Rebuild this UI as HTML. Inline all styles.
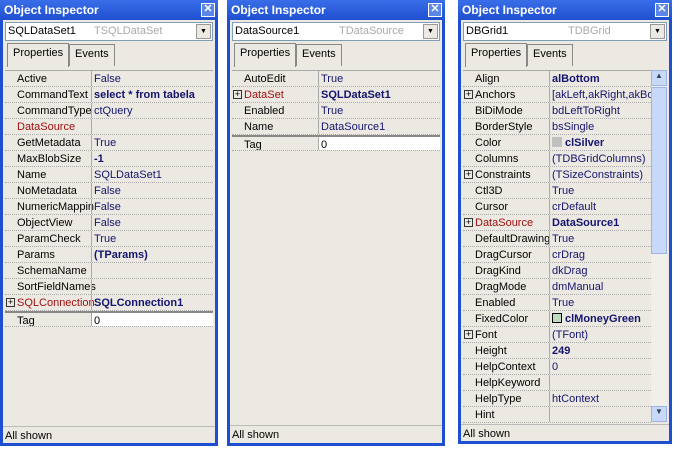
<!DOCTYPE html><html><head><style>
*{margin:0;padding:0;box-sizing:border-box}
body{width:682px;height:455px;background:#fff;position:relative;overflow:hidden;font-family:"Liberation Sans",sans-serif;font-size:11px}
.p{position:absolute;top:0;background:#ECE9E2;border:3px solid #1E4FD0;border-top:0}
.tb{position:absolute;left:-3px;right:-3px;top:0;height:20px;background:linear-gradient(#3A6EE8,#1E4FD0);color:#fff;font-weight:bold;font-size:12px;padding:3px 0 0 4px}
.x{position:absolute;right:3px;top:3px;width:14px;height:14px;background:#5A86E8;border:1px solid #fff;color:#fff;font-size:11px;line-height:11px;text-align:center}
.cb{position:absolute;left:2px;right:2px;top:22px;height:19px;background:#fff;border:1px solid #7f9db9;padding:2px 2px}
.cb .t{position:absolute;left:82px;top:2px;color:#aaa}
.dd{position:absolute;right:1px;top:1px;width:15px;height:15px;background:#ECE9E2;border:1px solid #999;font-size:7px;text-align:center;line-height:13px}
.tab{position:absolute;top:44px;height:22px;border:1px solid #888;border-bottom:0;padding:3px 5px;background:#ECE9E2}
.g{position:absolute;left:2px;right:2px;top:70px;border-top:1px solid #aaa}
.r{height:16px;border-bottom:1px dotted #aaa;position:relative;white-space:nowrap;overflow:hidden}
.n{position:absolute;left:12px;top:2px}
.v{position:absolute;top:2px;color:#14146e;border-left:1px solid #aaa;height:16px;top:0;padding:2px 0 0 2px}
.b{font-weight:bold}
.red{color:#a01010}
.pl{position:absolute;left:1px;top:3px;width:9px;height:9px;border:1px solid #333;font-size:9px;line-height:7px;text-align:center}
.sel{background:#ECE9E2;border-top:2px solid #888}
.sel .v{background:#fff;color:#000;right:0}
.st{position:absolute;left:0;right:0;height:20px;border-top:1px solid #bbb;padding:3px 2px}
</style></head><body>

<div class="p" style="left:0;width:218px;height:446px">
<div class="tb">Object Inspector<div class="x">✕</div></div>
<div class="cb">SQLDataSet1<span class="t" style="left:88px">TSQLDataSet</span><div class="dd">▼</div></div>
<div class="tab" style="left:4px;top:43px;height:24px">Properties</div><div class="tab" style="left:66px">Events</div>
<div class="g">
<div class="r"><span class="n">Active</span><span class="v" style="left:86px">False</span></div>
<div class="r"><span class="n">CommandText</span><span class="v b" style="left:86px">select * from tabela</span></div>
<div class="r"><span class="n">CommandType</span><span class="v" style="left:86px">ctQuery</span></div>
<div class="r"><span class="n red">DataSource</span><span class="v" style="left:86px"></span></div>
<div class="r"><span class="n">GetMetadata</span><span class="v" style="left:86px">True</span></div>
<div class="r"><span class="n">MaxBlobSize</span><span class="v b" style="left:86px">-1</span></div>
<div class="r"><span class="n">Name</span><span class="v" style="left:86px">SQLDataSet1</span></div>
<div class="r"><span class="n">NoMetadata</span><span class="v" style="left:86px">False</span></div>
<div class="r"><span class="n">NumericMappin</span><span class="v" style="left:86px">False</span></div>
<div class="r"><span class="n">ObjectView</span><span class="v" style="left:86px">False</span></div>
<div class="r"><span class="n">ParamCheck</span><span class="v" style="left:86px">True</span></div>
<div class="r"><span class="n">Params</span><span class="v b" style="left:86px">(TParams)</span></div>
<div class="r"><span class="n">SchemaName</span><span class="v" style="left:86px"></span></div>
<div class="r"><span class="n">SortFieldNames</span><span class="v" style="left:86px"></span></div>
<div class="r"><span class="pl">+</span><span class="n red">SQLConnection</span><span class="v b" style="left:86px">SQLConnection1</span></div>
<div class="r sel"><span class="n">Tag</span><span class="v" style="left:86px">0</span></div>
</div>
<div class="st" style="top:426px">All shown</div>
</div>

<div class="p" style="left:227px;width:218px;height:446px">
<div class="tb">Object Inspector<div class="x">✕</div></div>
<div class="cb">DataSource1<span class="t" style="left:106px">TDataSource</span><div class="dd">▼</div></div>
<div class="tab" style="left:4px;top:43px;height:24px">Properties</div><div class="tab" style="left:66px">Events</div>
<div class="g">
<div class="r"><span class="n">AutoEdit</span><span class="v" style="left:86px">True</span></div>
<div class="r"><span class="pl">+</span><span class="n red">DataSet</span><span class="v b" style="left:86px">SQLDataSet1</span></div>
<div class="r"><span class="n">Enabled</span><span class="v" style="left:86px">True</span></div>
<div class="r"><span class="n">Name</span><span class="v" style="left:86px">DataSource1</span></div>
<div class="r sel"><span class="n">Tag</span><span class="v" style="left:86px">0</span></div>
</div>
<div class="st" style="top:425px">All shown</div>
</div>

<div class="p" style="left:458px;width:214px;height:444px">
<div class="tb">Object Inspector<div class="x">✕</div></div>
<div class="cb">DBGrid1<span class="t" style="left:104px">TDBGrid</span><div class="dd">▼</div></div>
<div class="tab" style="left:4px;top:43px;height:24px">Properties</div><div class="tab" style="left:66px">Events</div>
<div class="g" style="right:18px">
<div class="r"><span class="n">Align</span><span class="v b" style="left:86px">alBottom</span></div>
<div class="r"><span class="pl">+</span><span class="n">Anchors</span><span class="v" style="left:86px">[akLeft,akRight,akBo</span></div>
<div class="r"><span class="n">BiDiMode</span><span class="v" style="left:86px">bdLeftToRight</span></div>
<div class="r"><span class="n">BorderStyle</span><span class="v" style="left:86px">bsSingle</span></div>
<div class="r"><span class="n">Color</span><span class="v b" style="left:86px"><span style="display:inline-block;width:10px;height:10px;background:#c0c0c0;vertical-align:-1px;margin-right:3px"></span>clSilver</span></div>
<div class="r"><span class="n">Columns</span><span class="v" style="left:86px">(TDBGridColumns)</span></div>
<div class="r"><span class="pl">+</span><span class="n">Constraints</span><span class="v" style="left:86px">(TSizeConstraints)</span></div>
<div class="r"><span class="n">Ctl3D</span><span class="v" style="left:86px">True</span></div>
<div class="r"><span class="n">Cursor</span><span class="v" style="left:86px">crDefault</span></div>
<div class="r"><span class="pl">+</span><span class="n red">DataSource</span><span class="v b" style="left:86px">DataSource1</span></div>
<div class="r"><span class="n">DefaultDrawing</span><span class="v" style="left:86px;background:#ECE9E2">True</span></div>
<div class="r"><span class="n">DragCursor</span><span class="v" style="left:86px">crDrag</span></div>
<div class="r"><span class="n">DragKind</span><span class="v" style="left:86px">dkDrag</span></div>
<div class="r"><span class="n">DragMode</span><span class="v" style="left:86px">dmManual</span></div>
<div class="r"><span class="n">Enabled</span><span class="v" style="left:86px">True</span></div>
<div class="r"><span class="n">FixedColor</span><span class="v b" style="left:86px"><span style="display:inline-block;width:10px;height:10px;background:#c0dcc0;border:1px solid #000;vertical-align:-1px;margin-right:3px"></span>clMoneyGreen</span></div>
<div class="r"><span class="pl">+</span><span class="n">Font</span><span class="v" style="left:86px">(TFont)</span></div>
<div class="r"><span class="n">Height</span><span class="v b" style="left:86px">249</span></div>
<div class="r"><span class="n">HelpContext</span><span class="v" style="left:86px">0</span></div>
<div class="r"><span class="n">HelpKeyword</span><span class="v" style="left:86px"></span></div>
<div class="r"><span class="n">HelpType</span><span class="v" style="left:86px">htContext</span></div>
<div class="r"><span class="n">Hint</span><span class="v" style="left:86px"></span></div>
</div>
<div style="position:absolute;right:2px;top:70px;width:16px;height:352px;background:#F0EFEA">
<div style="height:16px;background:#c8d8f8;border:1px solid #a0b4e0;font-size:8px;text-align:center;color:#345">▲</div>
<div style="position:absolute;top:17px;left:0;width:16px;height:167px;background:#c8d8f8;border:1px solid #a0b4e0"></div>
<div style="position:absolute;bottom:0;width:16px;height:16px;background:#c8d8f8;border:1px solid #a0b4e0;font-size:8px;text-align:center;color:#345">▼</div>
</div>
<div class="st" style="top:424px">All shown</div>
</div>
</body></html>
